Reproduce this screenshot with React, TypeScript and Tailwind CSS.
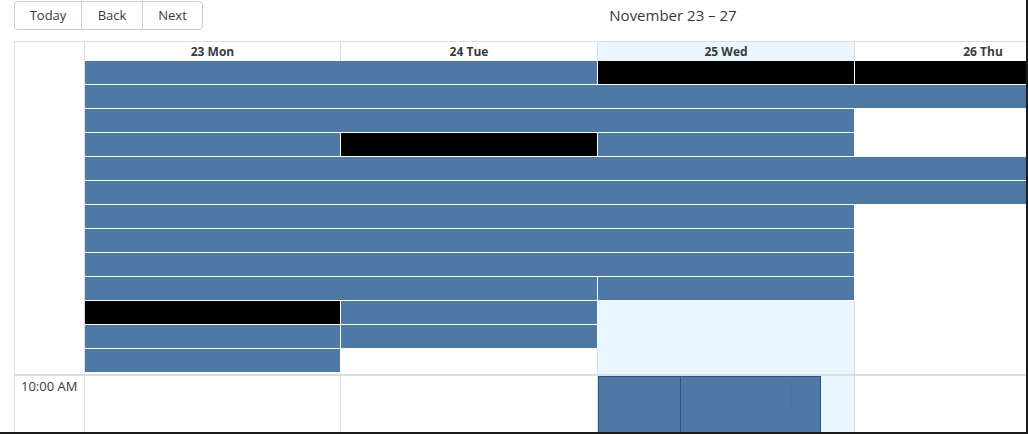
import React from "react";

type Seg = { span: number; color?: "blue" | "black" };

// week columns: Mon, Tue, Wed (today), Thu
const days = ["23 Mon", "24 Tue", "25 Wed", "26 Thu"];
const TODAY = 2;

const rows: Seg[][] = [
  [{ span: 2, color: "blue" }, { span: 1, color: "black" }, { span: 1, color: "black" }],
  [{ span: 4, color: "blue" }],
  [{ span: 3, color: "blue" }, { span: 1 }],
  [{ span: 1, color: "blue" }, { span: 1, color: "black" }, { span: 1, color: "blue" }, { span: 1 }],
  [{ span: 4, color: "blue" }],
  [{ span: 4, color: "blue" }],
  [{ span: 3, color: "blue" }, { span: 1 }],
  [{ span: 3, color: "blue" }, { span: 1 }],
  [{ span: 3, color: "blue" }, { span: 1 }],
  [{ span: 2, color: "blue" }, { span: 1, color: "blue" }, { span: 1 }],
  [{ span: 1, color: "black" }, { span: 1, color: "blue" }, { span: 1 }, { span: 1 }],
  [{ span: 1, color: "blue" }, { span: 1, color: "blue" }, { span: 1 }, { span: 1 }],
  [{ span: 1, color: "blue" }, { span: 1 }, { span: 1 }, { span: 1 }],
];

const spanClass: Record<number, string> = {
  1: "col-span-1",
  2: "col-span-2",
  3: "col-span-3",
  4: "col-span-4",
};

const cols = "grid grid-cols-[256px_257px_257px_257px]";

function AllDayRow({ segs }: { segs: Seg[] }) {
  let col = 0;
  return (
    <div className={cols}>
      {segs.map((s, i) => {
        const start = col;
        col += s.span;
        if (s.color) {
          return (
            <div
              key={i}
              className={`${spanClass[s.span]} h-[24px] border-b border-r border-white ${
                s.color === "blue" ? "bg-[#4e79a7]" : "bg-black"
              }`}
            />
          );
        }
        return (
          <div
            key={i}
            className={`${spanClass[s.span]} h-[24px] border-r border-[#ddd] ${
              start === TODAY ? "bg-[#eaf6ff]" : "bg-white"
            }`}
          />
        );
      })}
    </div>
  );
}

export default function App() {
  return (
    <div
      className="w-[1028px] h-[434px] overflow-hidden bg-white border-r-2 border-b-2 border-[#1c1c1c] text-[#373a3c]"
      style={{ fontFamily: '"Open Sans", "Noto Sans", sans-serif' }}
    >
      {/* Toolbar */}
      <div className="flex items-start pl-[14px] pt-[1px] h-[41px]">
        <div className="flex h-[29px] text-[13px] border border-[#ccc] rounded-[4px]">
          <button className="w-[67px] border-r border-[#ccc]">Today</button>
          <button className="w-[61px] border-r border-[#ccc]">Back</button>
          <button className="w-[59px]">Next</button>
        </div>
        <div className="w-[940px] text-center text-[15px] leading-[29px] shrink-0">
          November 23 – 27
        </div>
      </div>

      {/* Calendar */}
      <div className="ml-[14px] w-[1098px] border-l border-t border-[#ddd]">
        {/* Header + all-day */}
        <div className="flex">
          <div className="w-[70px] shrink-0 border-r border-[#ddd]" />
          <div>
            <div className={`${cols} h-[19px] text-[12px] font-bold`}>
              {days.map((d, i) => (
                <div
                  key={d}
                  className={`text-center leading-[19px] border-r border-[#ddd] ${
                    i === TODAY ? "bg-[#eaf6ff]" : ""
                  }`}
                >
                  {d}
                </div>
              ))}
            </div>
            {rows.map((r, i) => (
              <AllDayRow key={i} segs={r} />
            ))}
            <div className={`${cols} h-[1px]`}>
              {days.map((d, i) => (
                <div key={d} className={`border-r border-[#ddd] ${i === TODAY ? "bg-[#eaf6ff]" : ""}`} />
              ))}
            </div>
          </div>
        </div>

        {/* Time grid */}
        <div className="flex border-t-2 border-[#ddd] h-[60px]">
          <div className="w-[70px] shrink-0 border-r border-[#ddd] text-[13px] pl-[6px] pt-[1px]">
            10:00 AM
          </div>
          <div className={cols}>
            {days.map((d, i) => (
              <div
                key={d}
                className={`relative border-r border-[#ddd] ${i === TODAY ? "bg-[#eaf6ff]" : ""}`}
              >
                {i === TODAY && (
                  <>
                    <div className="absolute left-0 top-0 w-[83px] h-[60px] bg-[#4e79a7] border border-[#2a5580]" />
                    <div className="absolute left-[82px] top-0 w-[141px] h-[60px] bg-[#4e79a7] border border-[#2a5580]">
                      <div className="absolute left-[109px] top-[4px] h-[30px] border-l border-[#46709c]" />
                    </div>
                  </>
                )}
              </div>
            ))}
          </div>
        </div>
      </div>
    </div>
  );
}
